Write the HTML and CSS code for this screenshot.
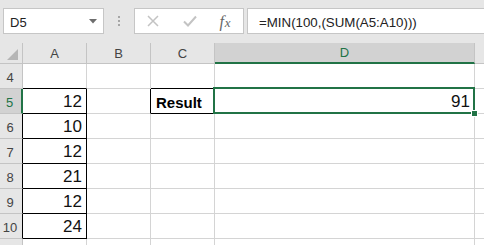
FILE: index.html
```html
<!DOCTYPE html>
<html lang="en">
<head>
  <meta charset="UTF-8">
  <meta name="viewport" content="width=device-width, initial-scale=1.0">
  <title>MIN of SUM</title>
  <link rel="stylesheet" href="styles.css">
</head>
<body>
  <div class="toolbar">
    <div class="name-box">
      <span>D5</span>
      <svg class="drop" width="8" height="5" viewBox="0 0 8 5"><path d="M0 0 H8 L4 4.5 Z" fill="#6d6d6d"/></svg>
    </div>
    <div class="grip"><i></i><i></i><i></i></div>
    <div class="fx-box">
      <span class="ico cancel">
        <svg width="12" height="12" viewBox="0 0 12 12"><path d="M1 1 L11 11 M11 1 L1 11" stroke="#c3c3c3" stroke-width="1.5" fill="none"/></svg>
      </span>
      <span class="ico enter">
        <svg width="14" height="12" viewBox="0 0 14 12"><path d="M1 6.5 L5 10.5 L13 1.5" stroke="#c3c3c3" stroke-width="2" fill="none"/></svg>
      </span>
      <span class="ico fx"><i>f</i><i class="x">x</i></span>
    </div>
    <div class="formula">=MIN(100,(SUM(A5:A10)))</div>
  </div>

  <div class="sheet">
    <div class="hd corner"><span class="tri"></span></div>
    <div class="hd col">A</div>
    <div class="hd col">B</div>
    <div class="hd col">C</div>
    <div class="hd col sel">D</div>
    <div class="hd col last"></div>

    <div class="hd row">4</div>
    <div class="c bb"></div>
    <div class="c"></div>
    <div class="c bb"></div>
    <div class="c"></div>
    <div class="c last"></div>

    <div class="hd row sel">5</div>
    <div class="c num box">12</div>
    <div class="c br"></div>
    <div class="c label bb">Result</div>
    <div class="c num active">91</div>
    <div class="c last"></div>

    <div class="hd row bk">6</div>
    <div class="c num box">10</div>
    <div class="c"></div>
    <div class="c"></div>
    <div class="c"></div>
    <div class="c last"></div>

    <div class="hd row bk">7</div>
    <div class="c num box">12</div>
    <div class="c"></div>
    <div class="c"></div>
    <div class="c"></div>
    <div class="c last"></div>

    <div class="hd row bk">8</div>
    <div class="c num box">21</div>
    <div class="c"></div>
    <div class="c"></div>
    <div class="c"></div>
    <div class="c last"></div>

    <div class="hd row bk">9</div>
    <div class="c num box">12</div>
    <div class="c"></div>
    <div class="c"></div>
    <div class="c"></div>
    <div class="c last"></div>

    <div class="hd row bk">10</div>
    <div class="c num box">24</div>
    <div class="c"></div>
    <div class="c"></div>
    <div class="c"></div>
    <div class="c last"></div>

    <div class="hd row"></div>
    <div class="c"></div>
    <div class="c"></div>
    <div class="c"></div>
    <div class="c"></div>
    <div class="c last"></div>
  </div>
</body>
</html>
```

FILE: styles.css
```css
body {
  margin: 0;
  width: 484px;
  height: 245px;
  overflow: hidden;
  background: #ffffff;
  font-family: 'Liberation Sans', Arial, sans-serif;
  color: #222;
}

/* Formula bar */
.toolbar {
  display: flex;
  align-items: flex-start;
  height: 43px;
  padding: 8px 0 0 3px;
  box-sizing: border-box;
  background: #e6e6e6;
}

.name-box {
  width: 101px;
  height: 26px;
  box-sizing: border-box;
  border: 1px solid #c6c6c6;
  background: #fff;
  display: flex;
  align-items: center;
  justify-content: space-between;
  padding: 3px 6px 0 6px;
  font-size: 13px;
}

.name-box .drop {
  margin-top: -3px;
}

.grip {
  width: 30px;
  height: 26px;
  display: flex;
  flex-direction: column;
  align-items: center;
  justify-content: center;
  gap: 2px;
}

.grip i {
  width: 2px;
  height: 2px;
  background: #a6a6a6;
}

.fx-box {
  width: 110px;
  height: 26px;
  box-sizing: border-box;
  border: 1px solid #c6c6c6;
  background: #fff;
  display: flex;
  align-items: center;
}

.ico {
  width: 18px;
  display: flex;
  justify-content: center;
}

.cancel { margin-left: 9px; }
.enter { margin-left: 19px; }

.fx {
  margin-left: 17px;
  align-items: baseline;
  font-family: 'Liberation Serif', 'Times New Roman', serif;
  color: #666;
  font-size: 16px;
  padding-top: 1px;
}

.fx .x {
  font-size: 13px;
  margin-left: 1px;
}

.formula {
  flex: 1;
  margin-left: 3px;
  margin-right: -1px;
  height: 26px;
  box-sizing: border-box;
  border: 1px solid #c6c6c6;
  background: #fff;
  display: flex;
  align-items: center;
  padding: 3px 0 0 11px;
  font-size: 13.3px;
}

/* Grid */
.sheet {
  display: grid;
  grid-template-columns: 23px 64px 64px 64px 260px 1fr;
  grid-template-rows: 21px;
  grid-auto-rows: 25px;
}

.sheet > div {
  box-sizing: border-box;
  border-right: 1px solid #d4d4d4;
  border-bottom: 1px solid #d4d4d4;
}

.hd {
  background: #e6e6e6;
  color: #444;
  font-size: 13px;
}

.sheet > .hd {
  border-color: #c4c4c4;
}

.col {
  display: flex;
  align-items: center;
  justify-content: center;
}

.corner {
  position: relative;
}

.tri {
  position: absolute;
  right: 4px;
  bottom: 3px;
  width: 0;
  height: 0;
  border-left: 11px solid transparent;
  border-bottom: 11px solid #b5b5b5;
}

.row {
  display: flex;
  align-items: flex-end;
  justify-content: center;
  padding: 0 2px 4px 0;
  line-height: 1;
}

.sheet > .hd.sel {
  background: #d2d2d2;
  color: #217346;
}

.sheet > .col.sel {
  border-bottom: 2px solid #217346;
}

.sheet > .row.sel {
  border-right: 2px solid #217346;
}

.sheet > .row.bk {
  border-right-color: #000;
}

.sheet > .last {
  border-right: none;
}

.c {
  display: flex;
  align-items: flex-end;
  line-height: 1;
  padding-bottom: 3px;
}

.num {
  justify-content: flex-end;
  padding-right: 4px;
  font-size: 17px;
  color: #111;
}

.label {
  padding-left: 5px;
  font-size: 15px;
  font-weight: bold;
  color: #000;
}

.sheet > .bb { border-bottom-color: #000; }
.sheet > .br { border-right-color: #000; }
.sheet > .box {
  border-right-color: #000;
  border-bottom-color: #000;
}

/* Active cell */
.active {
  position: relative;
  z-index: 1;
}

.active::after {
  content: "";
  position: absolute;
  top: -2px;
  left: -2px;
  right: -1px;
  bottom: -1px;
  border: 2px solid #217346;
}

.active::before {
  content: "";
  position: absolute;
  right: -4px;
  bottom: -4px;
  width: 5px;
  height: 5px;
  background: #217346;
  border: 1px solid #fff;
  z-index: 2;
}
```
